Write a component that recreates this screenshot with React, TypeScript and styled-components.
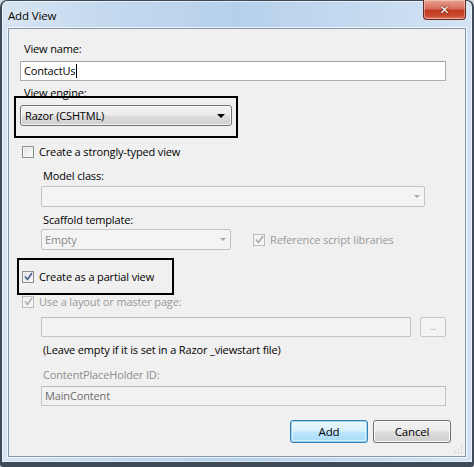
import React from "react";
import styled, { createGlobalStyle, css } from "styled-components";

const Global = createGlobalStyle`
  html, body { margin: 0; padding: 0; background: #d4d9df; }
  body { width: 474px; height: 467px; overflow: hidden; font-family: "Open Sans", "Noto Sans", sans-serif; font-size: 11px; letter-spacing: -0.15px; }
  * { box-sizing: border-box; }
`;

const Window = styled.div`
  width: 474px;
  height: 467px;
  border: 1px solid #3e4a57;
  border-width: 1px 2px 5px 2px;
  border-radius: 7px 7px 3px 3px;
  background: linear-gradient(90deg, #d6e4f2 0%, #c2d8ee 25%, #b6d0ea 50%, #c6dbf0 78%, #d3e3f3 100%);
  display: flex;
  flex-direction: column;
  position: relative;
  box-shadow: inset 0 0 0 1px rgba(255,255,255,0.55);
`;

const TitleBar = styled.div`
  height: 26px;
  display: flex;
  align-items: center;
  padding-left: 6px;
  flex: none;
`;

const Title = styled.span`
  font-size: 11.5px;
  color: #000;
  margin-top: 3px;
  text-shadow: 0 0 6px rgba(255,255,255,0.9);
`;

const CloseButton = styled.div`
  position: absolute;
  top: -1px;
  right: 6px;
  width: 43px;
  height: 20px;
  border: 1px solid #6a2a22;
  border-top: none;
  border-radius: 0 0 4px 4px;
  background: linear-gradient(180deg, #e8a090 0%, #d86f5c 45%, #c13a22 55%, #cc4a32 85%, #e2866a 100%);
  display: flex;
  align-items: center;
  justify-content: center;
  color: #fff;
  font-family: "DejaVu Sans", sans-serif;
  font-weight: bold;
  font-size: 12px;
  letter-spacing: 0;
  text-shadow: 0 0 2px #5a1a10, 0 0 1px #5a1a10;
  box-shadow: inset 0 0 0 1px rgba(255,255,255,0.35);
`;

const Client = styled.div`
  margin: 1px 6px 5px 6px;
  flex: 1;
  background: #f0f0f0;
  border: 1px solid #8497ad;
  box-shadow: 0 0 0 1px rgba(255,255,255,0.7);
  padding: 12px 0 0 11px;
  display: flex;
  flex-direction: column;
  position: relative;
`;

const Label = styled.div<{ $mt?: number; $indent?: number; $disabled?: boolean }>`
  height: 15px;
  line-height: 15px;
  margin-top: ${(p) => p.$mt ?? 0}px;
  margin-left: ${(p) => p.$indent ?? 4}px;
  color: ${(p) => (p.$disabled ? "#8e8e8e" : "#000")};
  white-space: nowrap;
`;

const TextBox = styled.div<{ $mt?: number; $w: number; $ml?: number; $disabled?: boolean }>`
  width: ${(p) => p.$w}px;
  height: 20px;
  margin-top: ${(p) => p.$mt ?? 0}px;
  margin-left: ${(p) => p.$ml ?? 0}px;
  border: 1px solid ${(p) => (p.$disabled ? "#c2c4c6" : "#abadb3")};
  border-top-color: ${(p) => (p.$disabled ? "#b9bbbd" : "#9ba0a8")};
  background: ${(p) => (p.$disabled ? "#f2f2f2" : "#fff")};
  color: ${(p) => (p.$disabled ? "#6d6d6d" : "#000")};
  padding-left: 3px;
  line-height: 18px;
  display: flex;
  align-items: center;
  flex: none;
`;

const Caret = styled.span`
  display: inline-block;
  width: 1px;
  height: 14px;
  background: #000;
  margin-left: 1px;
`;

const Row = styled.div<{ $mt?: number }>`
  display: flex;
  align-items: center;
  margin-top: ${(p) => p.$mt ?? 0}px;
  flex: none;
`;

const AnnotatedBox = styled.div<{ $mt: number }>`
  position: relative;
  display: flex;
  flex-direction: column;
  align-self: flex-start;
  margin-top: ${(p) => p.$mt}px;
`;

const Annotation = styled.div<{ $t: number; $l: number; $r: number; $b: number }>`
  position: absolute;
  top: ${(p) => -p.$t}px;
  left: ${(p) => -p.$l}px;
  right: ${(p) => -p.$r}px;
  bottom: ${(p) => -p.$b}px;
  border: 2px solid #000;
  pointer-events: none;
`;

const DropList = styled.div`
  width: 212px;
  height: 21px;
  border: 1px solid #707070;
  border-radius: 3px;
  background: linear-gradient(180deg, #f2f2f2 0%, #ebebeb 49%, #dddddd 51%, #cfcfcf 100%);
  box-shadow: inset 0 0 0 1px rgba(255,255,255,0.8);
  display: flex;
  align-items: center;
  justify-content: space-between;
  padding: 0 4px 0 4px;
  color: #000;
`;

const Arrow = styled.span<{ $light?: boolean }>`
  width: 0;
  height: 0;
  border-left: ${(p) => (p.$light ? 3 : 4)}px solid transparent;
  border-right: ${(p) => (p.$light ? 3 : 4)}px solid transparent;
  border-top: ${(p) => (p.$light ? 3 : 4)}px solid ${(p) => (p.$light ? "#a8a8a8" : "#000")};
  margin-right: 2px;
`;

const Combo = styled.div<{ $w: number; $mt?: number }>`
  width: ${(p) => p.$w}px;
  height: 21px;
  margin-top: ${(p) => p.$mt ?? 0}px;
  margin-left: 21px;
  border: 1px solid #c3c3c3;
  border-radius: 2px;
  background: #f4f4f4;
  display: flex;
  align-items: center;
  justify-content: space-between;
  padding: 0 2px 0 3px;
  color: #8a8a8a;
  flex: none;
`;

const Check = styled.span<{ $disabled?: boolean }>`
  width: 12px;
  height: 12px;
  flex: none;
  border: 1px solid ${(p) => (p.$disabled ? "#bcbcbc" : "#8e8f8f")};
  background: ${(p) =>
    p.$disabled ? "#f4f4f4" : "linear-gradient(135deg, #dcdcdc 0%, #f2f2f2 60%, #fbfbfb 100%)"};
  box-shadow: inset 0 0 0 1px #f4f4f4;
  display: flex;
  align-items: center;
  justify-content: center;
  margin-left: 2px;
  margin-right: 5px;
`;

const CheckText = styled.span<{ $disabled?: boolean }>`
  color: ${(p) => (p.$disabled ? "#9a9a9a" : "#000")};
  white-space: nowrap;
  line-height: 15px;
`;

const SubColumn = styled.div`
  display: flex;
  flex-direction: column;
`;

const InlineRow = styled.div<{ $mt?: number }>`
  display: flex;
  align-items: center;
  margin-top: ${(p) => p.$mt ?? 0}px;
`;

const SideCheck = styled(Row)`
  margin-left: 20px;
`;

const BrowseButton = styled.div`
  width: 26px;
  height: 20px;
  margin-left: 9px;
  border: 1px solid #c6c6c6;
  border-radius: 2px;
  background: #f4f4f4;
  color: #a0a0a0;
  font-size: 9px;
  display: flex;
  align-items: center;
  justify-content: center;
  padding-bottom: 2px;
`;

const ButtonRow = styled.div`
  display: flex;
  justify-content: flex-end;
  gap: 5px;
  margin-top: 14px;
  padding-right: 14px;
`;

const Button = styled.div<{ $default?: boolean }>`
  width: 78px;
  height: 23px;
  border-radius: 3px;
  display: flex;
  align-items: center;
  justify-content: center;
  color: #000;
  font-size: 11.5px;
  ${(p) =>
    p.$default
      ? css`
          border: 1px solid #3c7fb1;
          background: linear-gradient(180deg, #eaf6fd 0%, #d9f0fc 49%, #bee6fd 51%, #a7d9f5 100%);
          box-shadow: inset 0 0 0 1px #8ed3f5, inset 0 0 0 2px rgba(255,255,255,0.5);
        `
      : css`
          border: 1px solid #707070;
          background: linear-gradient(180deg, #f2f2f2 0%, #ebebeb 49%, #dddddd 51%, #cfcfcf 100%);
          box-shadow: inset 0 0 0 1px rgba(255,255,255,0.85);
        `}
`;

const Grip = styled.svg`
  position: absolute;
  right: 2px;
  bottom: 2px;
`;

const CheckMark = ({ color }: { color: string }) => (
  <svg width="9" height="9" viewBox="0 0 9 9">
    <path d="M1 4.5 L3.5 7.5 L8 1" fill="none" stroke={color} strokeWidth="1.6" />
  </svg>
);

export default function App() {
  return (
    <>
      <Global />
      <Window>
        <TitleBar>
          <Title>Add View</Title>
        </TitleBar>
        <CloseButton>✕</CloseButton>
        <Client>
          <Label>View name:</Label>
          <TextBox $mt={5} $w={426}>
            ContactUs
            <Caret />
          </TextBox>
          <Label $mt={4}>View engine:</Label>
          <AnnotatedBox $mt={5}>
            <DropList>
              <span>Razor (CSHTML)</span>
              <Arrow />
            </DropList>
            <Annotation $t={9} $l={6} $r={6} $b={12} />
          </AnnotatedBox>
          <Row $mt={18}>
            <Check />
            <CheckText>Create a strongly-typed view</CheckText>
          </Row>
          <SubColumn>
            <Label $mt={9} $indent={23}>Model class:</Label>
            <Combo $w={384} $mt={3}>
              <span />
              <Arrow $light />
            </Combo>
            <Label $mt={5} $indent={23}>Scaffold template:</Label>
            <InlineRow $mt={2}>
              <Combo $w={190}>
                <span>Empty</span>
                <Arrow $light />
              </Combo>
              <SideCheck>
                <Check $disabled>
                  <CheckMark color="#a9a9a9" />
                </Check>
                <CheckText $disabled>Reference script libraries</CheckText>
              </SideCheck>
            </InlineRow>
          </SubColumn>
          <AnnotatedBox $mt={19}>
            <Row>
              <Check>
                <CheckMark color="#4a5c8f" />
              </Check>
              <CheckText>Create as a partial view</CheckText>
            </Row>
            <Annotation $t={11} $l={3} $r={20} $b={11} />
          </AnnotatedBox>
          <Row $mt={10}>
            <Check $disabled>
              <CheckMark color="#b0b0b0" />
            </Check>
            <CheckText $disabled>Use a layout or master page:</CheckText>
          </Row>
          <InlineRow $mt={8}>
            <TextBox $w={370} $ml={21} $disabled />
            <BrowseButton>...</BrowseButton>
          </InlineRow>
          <Label $mt={5} $indent={23}>(Leave empty if it is set in a Razor _viewstart file)</Label>
          <Label $mt={10} $indent={23} $disabled>ContentPlaceHolder ID:</Label>
          <TextBox $mt={4} $w={405} $ml={21} $disabled>MainContent</TextBox>
          <ButtonRow>
            <Button $default>Add</Button>
            <Button>Cancel</Button>
          </ButtonRow>
          <Grip width="8" height="8" viewBox="0 0 8 8">
            <g fill="#b8b8b8">
              <rect x="6" y="0" width="1" height="1" />
              <rect x="3" y="3" width="1" height="1" />
              <rect x="6" y="3" width="1" height="1" />
              <rect x="0" y="6" width="1" height="1" />
              <rect x="3" y="6" width="1" height="1" />
              <rect x="6" y="6" width="1" height="1" />
            </g>
          </Grip>
        </Client>
      </Window>
    </>
  );
}
